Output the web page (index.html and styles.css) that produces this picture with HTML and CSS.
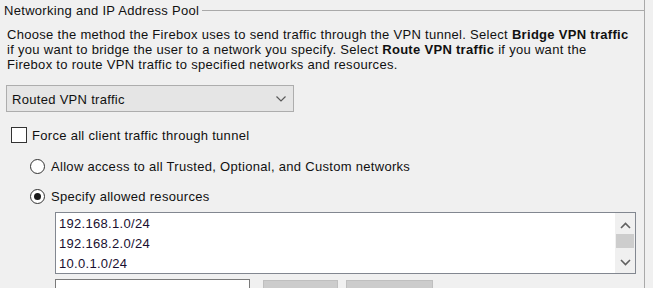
FILE: index.html
```html
<!DOCTYPE html>
<html>
<head>
<meta charset="utf-8">
<link rel="stylesheet" href="styles.css">
</head>
<body>
<div class="group">
  <div class="title-row"><span class="legend">Networking and IP Address Pool</span><span class="rule"></span></div>
  <p class="desc">Choose the method the Firebox uses to send traffic through the VPN tunnel. Select <b>Bridge VPN traffic</b><br>if you want to bridge the user to a network you specify. Select <b>Route VPN traffic</b> if you want the<br>Firebox to route VPN traffic to specified networks and resources.</p>
  <div class="select">
    <span class="select-text">Routed VPN traffic</span>
    <svg class="chev" width="10" height="6" viewBox="0 0 10 6"><path d="M0.5 0.5 L5 5 L9.5 0.5" fill="none" stroke="#5a5a5a" stroke-width="1.2"/></svg>
  </div>
  <div class="check-row"><span class="checkbox"></span><span class="label">Force all client traffic through tunnel</span></div>
  <div class="radio-row first"><span class="radio"></span><span class="label">Allow access to all Trusted, Optional, and Custom networks</span></div>
  <div class="radio-row second"><span class="radio checked"><span class="dot"></span></span><span class="label">Specify allowed resources</span></div>
  <div class="listbox">
    <div class="items">
      <div class="item">192.168.1.0/24</div>
      <div class="item">192.168.2.0/24</div>
      <div class="item">10.0.1.0/24</div>
    </div>
    <div class="scrollbar">
      <svg class="arrow" width="11" height="7" viewBox="0 0 11 7"><path d="M1 6 L5.5 1.5 L10 6" fill="none" stroke="#606060" stroke-width="1.6"/></svg>
      <div class="thumb"></div>
      <svg class="arrow" width="11" height="7" viewBox="0 0 11 7"><path d="M1 1 L5.5 5.5 L10 1" fill="none" stroke="#606060" stroke-width="1.6"/></svg>
    </div>
  </div>
  <div class="bottom-row">
    <div class="input"></div>
    <div class="btn b1"></div>
    <div class="btn b2"></div>
  </div>
</div>
</body>
</html>
```
FILE: styles.css
```css
html, body {
  margin: 0;
  padding: 0;
  background: #f0f0f0;
  overflow: hidden;
}
body {
  width: 653px;
  height: 288px;
  font-family: "Liberation Sans", Arial, sans-serif;
  font-size: 13px;
  letter-spacing: 0.3px;
  color: #111;
}
.group {
  width: 645px;
  height: 288px;
  overflow: hidden;
  border-right: 1px solid #a9a9a9;
  box-sizing: border-box;
}
.title-row {
  display: flex;
  align-items: center;
  padding-top: 3px;
  height: 15px;
  line-height: 15px;
}
.legend {
  padding-left: 4px;
  white-space: nowrap;
}
.rule {
  flex: 1;
  height: 0;
  border-top: 1px solid #a9a9a9;
  margin-left: 3px;
}
.desc {
  margin: 9px 0 0 7px;
  line-height: 15px;
  white-space: nowrap;
}
.desc b {
  font-weight: bold;
}
.select {
  margin: 13px 0 0 6px;
  width: 288px;
  height: 27px;
  box-sizing: border-box;
  border: 1px solid #adadad;
  background: #e5e5e5;
  display: flex;
  align-items: center;
  justify-content: space-between;
  padding: 0 7px 0 5px;
}
.select-text {
  line-height: 15px;
  padding-top: 1px;
}
.chev {
  display: block;
  margin-top: 1px;
}
.check-row {
  margin: 15px 0 0 11px;
  display: flex;
  align-items: center;
  height: 16px;
}
.checkbox {
  width: 16px;
  height: 16px;
  box-sizing: border-box;
  border: 1px solid #333;
  background: #fff;
  flex: none;
}
.check-row .label {
  margin-left: 5px;
  line-height: 15px;
}
.radio-row {
  display: flex;
  align-items: center;
  height: 15px;
  margin-left: 30px;
}
.radio-row.first { margin-top: 16px; }
.radio-row.second { margin-top: 15px; }
.radio {
  width: 15px;
  height: 15px;
  box-sizing: border-box;
  border: 1px solid #333;
  border-radius: 50%;
  background: #fff;
  flex: none;
  display: flex;
  align-items: center;
  justify-content: center;
}
.dot {
  width: 7px;
  height: 7px;
  border-radius: 50%;
  background: #1a1a1a;
}
.radio-row .label {
  margin-left: 6px;
  line-height: 15px;
}
.listbox {
  margin: 8px 0 0 55px;
  width: 581px;
  height: 62px;
  box-sizing: border-box;
  border: 1px solid #828790;
  background: #fff;
  display: flex;
}
.items {
  flex: 1;
  padding: 1px 0 0 3px;
  overflow: hidden;
}
.item {
  line-height: 20px;
  height: 20px;
  color: #1a1030;
}
.scrollbar {
  width: 20px;
  background: #f0f0f0;
  display: flex;
  flex-direction: column;
  align-items: center;
  padding-top: 9px;
  box-sizing: border-box;
}
.arrow {
  display: block;
}
.thumb {
  width: 18px;
  height: 14px;
  background: #cdcdcd;
  margin: 5px 0 11px 0;
}
.bottom-row {
  display: flex;
  margin: 5px 0 0 55px;
}
.input {
  width: 195px;
  height: 24px;
  box-sizing: border-box;
  border: 1px solid #7a7a7a;
  background: #fff;
}
.btn {
  height: 24px;
  box-sizing: border-box;
  border: 1px solid #bfbfbf;
  background: #cccccc;
  margin-top: 1px;
}
.b1 {
  width: 75px;
  margin-left: 13px;
}
.b2 {
  width: 87px;
  margin-left: 8px;
}
```
